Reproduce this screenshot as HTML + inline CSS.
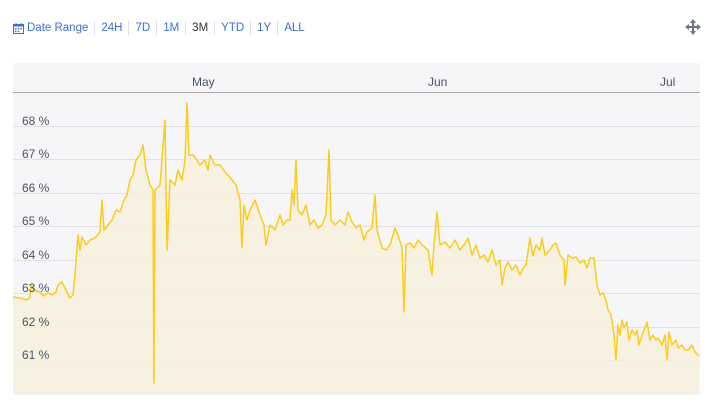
<!DOCTYPE html>
<html><head><meta charset="utf-8"><style>
body{margin:0;width:717px;height:410px;background:#fff;font-family:"Liberation Sans",sans-serif;overflow:hidden;position:relative}
.bar{position:absolute;top:21px;left:13px;font-size:11.5px;color:#3d6fd6;display:flex;align-items:center}
.bar span{padding:0 6px;border-left:1px solid #dde;line-height:14px}
.bar span.f{border:none;padding-left:0}
.bar span.a{color:#333}
</style></head><body>
<div class="bar">
<svg width="11" height="11" viewBox="0 0 11 11" style="margin-right:3px"><rect x="0.5" y="1.5" width="10" height="9" fill="none" stroke="#3d6fd6"/><rect x="0.5" y="1.5" width="10" height="2" fill="#3d6fd6"/><rect x="2" y="5" width="1.5" height="1.5" fill="#3d6fd6"/><rect x="4.7" y="5" width="1.5" height="1.5" fill="#3d6fd6"/><rect x="7.4" y="5" width="1.5" height="1.5" fill="#3d6fd6"/><rect x="2" y="7.7" width="1.5" height="1.5" fill="#3d6fd6"/><rect x="4.7" y="7.7" width="1.5" height="1.5" fill="#3d6fd6"/><rect x="2.5" y="0" width="1" height="2" fill="#3d6fd6"/><rect x="7.5" y="0" width="1" height="2" fill="#3d6fd6"/></svg>
<span class="f">Date Range</span><span>24H</span><span>7D</span><span>1M</span><span class="a">3M</span><span>YTD</span><span>1Y</span><span>ALL</span></div>
<svg width="717" height="410" style="position:absolute;left:0;top:0">
<g transform="translate(693,27)" fill="#6b7785"><rect x="-1" y="-6" width="2" height="12"/><rect x="-6" y="-1" width="12" height="2"/><path d="M0,-8 L-3,-4 L3,-4Z M0,8 L-3,4 L3,4Z M-8,0 L-4,-3 L-4,3Z M8,0 L4,-3 L4,3Z"/></g>
<rect x="13" y="63" width="687" height="332" fill="#f6f6f9"/>
<line x1="13" y1="92.5" x2="700" y2="92.5" stroke="#a8a8aa" stroke-width="1"/>
<g stroke="#e2e2e6" stroke-width="1">
<line x1="13" y1="126.5" x2="700" y2="126.5"/><line x1="13" y1="159.5" x2="700" y2="159.5"/><line x1="13" y1="193.5" x2="700" y2="193.5"/><line x1="13" y1="226.5" x2="700" y2="226.5"/><line x1="13" y1="260.5" x2="700" y2="260.5"/><line x1="13" y1="293.5" x2="700" y2="293.5"/><line x1="13" y1="327.5" x2="700" y2="327.5"/><line x1="13" y1="360.5" x2="700" y2="360.5"/></g>
<g font-size="12" fill="#4a5566" font-family="Liberation Sans,sans-serif">
<text x="192" y="86">May</text><text x="428" y="86">Jun</text><text x="660" y="86">Jul</text></g>
<polygon fill="#f7f0dc" fill-opacity="0.8" points="13,394 13,297 20,298 27,300 30,297 31,285 34,290 40,292 43,296 48,293 52,295 56,292 58,285 62,282 66,290 70,298 73,295 75,275 78,235 80,250 82,237 86,245 90,240 95,238 100,232 102,200 104,230 108,225 112,220 116,210 120,212 124,200 127,195 130,180 133,175 136,160 140,155 143,145 146,170 150,185 153,190 154,383 155,190 160,185 165,120 167,250 170,180 175,185 178,170 182,180 185,160 187,103 189,155 193,155 197,160 200,165 205,160 208,170 210,155 215,165 220,165 225,172 228,175 232,180 236,185 240,200 242,248 244,205 247,220 250,210 255,200 260,215 264,225 266,245 270,225 275,230 280,215 283,225 287,220 290,220 292,190 294,205 296,160 298,210 302,215 306,205 310,225 314,220 318,228 322,225 326,215 329,150 331,220 335,225 340,220 345,225 348,212 352,222 356,228 360,225 364,240 367,232 372,228 375,195 377,230 382,248 386,250 390,245 395,228 398,235 402,248 404,312 406,245 410,243 414,248 418,240 422,245 428,250 432,275 434,245 437,212 440,245 445,242 450,248 455,240 460,250 464,245 468,238 472,255 476,245 480,258 484,255 488,262 492,250 496,265 500,260 502,285 505,268 508,262 512,270 516,265 520,275 523,268 526,265 530,238 533,256 536,245 540,250 542,238 545,255 550,250 553,245 556,243 560,255 564,260 565,285 568,255 572,258 576,257 580,263 584,260 587,268 590,258 594,258 597,285 600,295 603,293 606,300 608,310 611,315 614,335 616,360 618,325 620,335 622,320 624,328 627,322 629,340 632,330 635,335 637,330 639,345 642,335 645,328 647,322 650,340 653,335 656,340 658,338 662,345 665,335 667,360 669,332 672,345 676,340 678,348 682,345 685,350 688,350 692,345 695,352 699,356 699,394"/>
<polyline fill="none" stroke="#fccc1a" stroke-width="1.5" stroke-linejoin="round" points="13,297 20,298 27,300 30,297 31,285 34,290 40,292 43,296 48,293 52,295 56,292 58,285 62,282 66,290 70,298 73,295 75,275 78,235 80,250 82,237 86,245 90,240 95,238 100,232 102,200 104,230 108,225 112,220 116,210 120,212 124,200 127,195 130,180 133,175 136,160 140,155 143,145 146,170 150,185 153,190 154,383 155,190 160,185 165,120 167,250 170,180 175,185 178,170 182,180 185,160 187,103 189,155 193,155 197,160 200,165 205,160 208,170 210,155 215,165 220,165 225,172 228,175 232,180 236,185 240,200 242,248 244,205 247,220 250,210 255,200 260,215 264,225 266,245 270,225 275,230 280,215 283,225 287,220 290,220 292,190 294,205 296,160 298,210 302,215 306,205 310,225 314,220 318,228 322,225 326,215 329,150 331,220 335,225 340,220 345,225 348,212 352,222 356,228 360,225 364,240 367,232 372,228 375,195 377,230 382,248 386,250 390,245 395,228 398,235 402,248 404,312 406,245 410,243 414,248 418,240 422,245 428,250 432,275 434,245 437,212 440,245 445,242 450,248 455,240 460,250 464,245 468,238 472,255 476,245 480,258 484,255 488,262 492,250 496,265 500,260 502,285 505,268 508,262 512,270 516,265 520,275 523,268 526,265 530,238 533,256 536,245 540,250 542,238 545,255 550,250 553,245 556,243 560,255 564,260 565,285 568,255 572,258 576,257 580,263 584,260 587,268 590,258 594,258 597,285 600,295 603,293 606,300 608,310 611,315 614,335 616,360 618,325 620,335 622,320 624,328 627,322 629,340 632,330 635,335 637,330 639,345 642,335 645,328 647,322 650,340 653,335 656,340 658,338 662,345 665,335 667,360 669,332 672,345 676,340 678,348 682,345 685,350 688,350 692,345 695,352 699,356"/>
<g font-size="12" fill="#4a5566" font-family="Liberation Sans,sans-serif">
<text x="22" y="125">68 %</text><text x="22" y="158">67 %</text><text x="22" y="192">66 %</text><text x="22" y="225">65 %</text><text x="22" y="259">64 %</text><text x="22" y="292">63 %</text><text x="22" y="326">62 %</text><text x="22" y="359">61 %</text></g>
</svg>
</body></html>
